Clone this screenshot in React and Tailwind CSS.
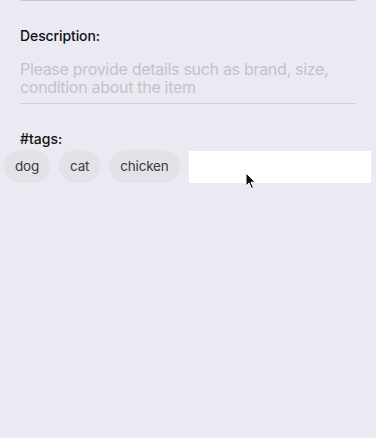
import React from 'react';

const tags = ['dog', 'cat', 'chicken'];

// Mouse pointer drawn over the input
const Cursor = () => (
  <svg width="12" height="18" viewBox="0 0 12 18" className="absolute left-[56px] top-[21px]">
    <path d="M1 1 L1 14 L4 11 L6.5 16.5 L8.5 15.6 L6 10.2 L10.2 10.2 Z" fill="#111" stroke="#fff" strokeWidth="1" />
  </svg>
);

export default function App() {
  return (
    <div
      className="w-[376px] h-[438px] bg-[#ebeaf3] overflow-hidden"
      style={{ fontFamily: 'Inter, "Noto Sans", sans-serif' }}
    >
      <div className="mx-5 h-px bg-[#c9c8cf]" />

      <div className="px-5 pt-[26px]">
        <div className="text-[14px] font-medium text-[#111] leading-[18px] tracking-[-0.1px]">Description:</div>
        <div className="mt-[15px] pb-[7px] border-b border-[#cfced5] text-[16px] leading-[18px] tracking-[-0.3px] text-[#c3c2ca]">
          Please provide details such as brand, size, condition about the item
        </div>
      </div>

      <div className="px-5 pt-[26px] text-[14px] font-medium text-[#111] leading-[18px]">#tags:</div>

      <div className="flex items-center gap-[9px] pl-1 pr-[5px] mt-[2px]">
        {tags.map((t) => (
          <div
            key={t}
            className="h-[33px] px-[11px] rounded-full bg-[#e3e2e8] flex items-center text-[13.5px] tracking-[-0.2px] text-[#3a3a3c]"
          >
            {t}
          </div>
        ))}
        <div className="relative flex-1 h-[32px] bg-white">
          <Cursor />
        </div>
      </div>
    </div>
  );
}
